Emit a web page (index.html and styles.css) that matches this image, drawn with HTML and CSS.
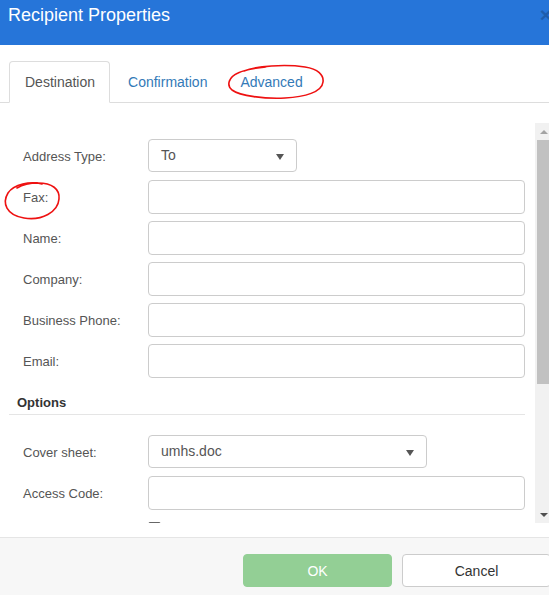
FILE: index.html
```html
<!DOCTYPE html>
<html lang="en">
<head>
    <meta charset="UTF-8">
    <title>Recipient Properties</title>
    <link rel="stylesheet" href="styles.css">
</head>
<body>

<div class="modal">
    <div class="modal-header">
        <h4 class="modal-title">Recipient Properties</h4>
        <span class="close">&times;</span>
    </div>

    <ul class="nav-tabs">
        <li class="active"><a href="#">Destination</a></li>
        <li><a href="#">Confirmation</a></li>
        <li><a href="#">Advanced</a></li>
    </ul>

    <div class="pane">
        <div class="scroll">
            <div class="form-row">
                <label>Address Type:</label>
                <div class="form-control select select-short">To<span class="caret"></span></div>
            </div>
            <div class="form-row">
                <label>Fax:</label>
                <div class="form-control"></div>
            </div>
            <div class="form-row">
                <label>Name:</label>
                <div class="form-control"></div>
            </div>
            <div class="form-row">
                <label>Company:</label>
                <div class="form-control"></div>
            </div>
            <div class="form-row">
                <label>Business Phone:</label>
                <div class="form-control"></div>
            </div>
            <div class="form-row">
                <label>Email:</label>
                <div class="form-control"></div>
            </div>

            <div class="section-title">Options</div>

            <div class="form-row">
                <label>Cover sheet:</label>
                <div class="form-control select select-wide">umhs.doc<span class="caret"></span></div>
            </div>
            <div class="form-row">
                <label>Access Code:</label>
                <div class="form-control"></div>
            </div>
            <div class="checkbox-row"><span class="checkbox"></span></div>
        </div>

        <div class="scrollbar">
            <div class="sb-btn"><span class="arrow-up"></span></div>
            <div class="sb-thumb"></div>
            <div class="sb-track"></div>
            <div class="sb-btn"><span class="arrow-down"></span></div>
        </div>
    </div>

    <div class="modal-footer">
        <button class="btn btn-ok">OK</button>
        <button class="btn btn-cancel">Cancel</button>
    </div>
</div>

<!-- hand drawn marks on the screenshot -->
<svg class="marks" width="552" height="595" viewBox="0 0 552 595">
    <path d="M244 71 C256 66, 285 64, 305 67 C318 69, 324 75, 323 82 C322 92, 305 97, 285 98 C265 99, 240 96, 232 90 C226 85, 229 77, 238 73 C246 69, 256 68, 266 67"/>
    <path d="M42 184 C30 181, 14 184, 8 193 C2 203, 6 215, 24 218 C42 221, 58 212, 59 199 C60 189, 52 183, 38 183 C30 183, 22 185, 17 188"/>
</svg>

</body>
</html>
```

FILE: styles.css
```css
html, body { margin: 0; padding: 0; overflow: hidden; background: #fff; }
body { font-family: "Liberation Sans", Arial, sans-serif; color: #333; }
.modal { width: 552px; height: 595px; overflow: hidden; }

.modal-header { display: flex; justify-content: space-between; align-items: flex-start; height: 45px; box-sizing: border-box; padding: 5px 0 0 8px; background: #2675d9; }
.modal-title { margin: 0; font-size: 18px; font-weight: normal; line-height: 20px; color: #fff; }
.close { font-size: 21px; font-weight: bold; line-height: 20px; color: #000; opacity: 0.2; }

.nav-tabs { display: flex; list-style: none; margin: 16px 0 0; padding: 0 0 0 9px; border-bottom: 1px solid #ddd; }
.nav-tabs li { margin-right: 2px; margin-bottom: -1px; }
.nav-tabs a { display: block; height: 40px; line-height: 40px; padding: 0 14px 0 15px; font-size: 14px; color: #337ab7; text-decoration: none; border: 1px solid transparent; border-radius: 4px 4px 0 0; }
.nav-tabs .active a { color: #555; background: #fff; border-color: #ddd #ddd transparent; }

.pane { display: flex; height: 400px; margin-top: 20px; }
.scroll { flex: 1; overflow: hidden; padding: 16px 10px 0 9px; }

.form-row { display: flex; align-items: center; height: 34px; margin-bottom: 7px; padding-left: 14px; }
.form-row label { width: 125px; flex: none; font-size: 13px; color: #555; }
.form-control { flex: 1; height: 34px; box-sizing: border-box; border: 1px solid #ccc; border-radius: 4px; padding: 0 12px; font-size: 14px; line-height: 31px; color: #555; background: #fff; }
.select { position: relative; flex: none; align-self: flex-start; line-height: 30px; }
.select-short { width: 149px; height: 33px; }
.select-wide { width: 279px; height: 33px; }
.caret { position: absolute; right: 12px; top: 14px; width: 0; height: 0; border-left: 4px solid transparent; border-right: 4px solid transparent; border-top: 6px solid #555; }

.section-title { margin: 15px 0 20px; padding: 0 0 2px 8px; border-bottom: 1px solid #e5e5e5; font-size: 13px; font-weight: bold; line-height: 19px; color: #333; }

.checkbox-row { margin-top: 12px; padding-left: 139px; }
.checkbox { display: block; width: 13px; height: 13px; box-sizing: border-box; border: 1px solid #666; border-radius: 2px; }

.scrollbar { width: 17px; flex: none; display: flex; flex-direction: column; background: #f1f1f1; }
.sb-btn { height: 17px; display: flex; align-items: center; justify-content: center; }
.arrow-up { width: 0; height: 0; border-left: 4px solid transparent; border-right: 4px solid transparent; border-bottom: 4px solid #a3a3a3; }
.arrow-down { width: 0; height: 0; border-left: 4px solid transparent; border-right: 4px solid transparent; border-top: 4px solid #505050; }
.sb-thumb { height: 244px; margin: 0 2px; background: #c1c1c1; }
.sb-track { flex: 1; }

.modal-footer { display: flex; justify-content: flex-end; gap: 10px; margin-top: 14px; padding: 16px 1px 20px 0; border-top: 1px solid #e5e5e5; background: #f7f7f7; }
.btn { width: 149px; height: 33px; border-radius: 4px; font-family: inherit; font-size: 14px; cursor: pointer; }
.btn-ok { background: #93cf95; border: 1px solid #93cf95; color: #fff; }
.btn-cancel { background: #fff; border: 1px solid #ccc; color: #333; }

.marks { position: absolute; left: 0; top: 0; pointer-events: none; }
.marks path { fill: none; stroke: #ee1111; stroke-width: 1.6; stroke-linecap: round; }
```
